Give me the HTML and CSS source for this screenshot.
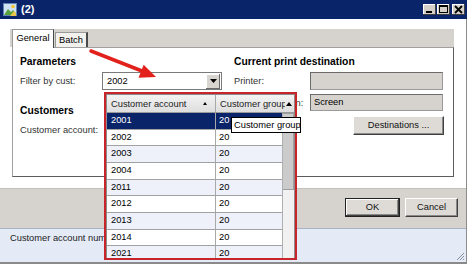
FILE: index.html
```html
<!DOCTYPE html>
<html>
<head>
<meta charset="utf-8">
<link rel="stylesheet" href="styles.css">
</head>
<body>
<div class="window">
  <div class="titlebar">
    <svg class="app-icon" width="14" height="13" viewBox="0 0 14 13">
      <rect x="0.5" y="0.5" width="13" height="12" fill="#cfe2f4" stroke="#5f86b0"/>
      <path d="M1 12 L5 6 L8 9 L10 7 L13 11 L13 12 Z" fill="#5aa33c"/>
      <circle cx="10" cy="3.5" r="1.8" fill="#f2c531"/>
      <path d="M7 13 L11 8 L13 10 L13 13 Z" fill="#e8c64a"/>
    </svg>
    <span class="title">(2)</span>
    <div class="caption-buttons">
      <span class="cap-btn"><svg width="13" height="11" viewBox="0 0 13 11"><rect x="3" y="7" width="6" height="2" fill="#000"/></svg></span>
      <span class="cap-btn"><svg width="13" height="11" viewBox="0 0 13 11"><rect x="2.5" y="1.5" width="8" height="7" fill="none" stroke="#000"/><rect x="2" y="1" width="9" height="2" fill="#000"/></svg></span>
      <span class="cap-btn cap-close"><svg width="13" height="11" viewBox="0 0 13 11"><path d="M3 2 L10 9 M10 2 L3 9" stroke="#000" stroke-width="1.8"/></svg></span>
    </div>
  </div>
  <div class="client">
    <div class="tabctl">
      <div class="tabstrip">
        <div class="tab tab-active">General</div>
        <div class="tab tab-batch">Batch</div>
      </div>
      <div class="panel">
        <div class="col col-left">
          <div class="group-title">Parameters</div>
          <div class="row">
            <span class="lbl lbl-left">Filter by cust:</span>
            <div class="combo">
              <span class="combo-text">2002</span>
              <span class="combo-btn"><svg width="7" height="4" viewBox="0 0 7 4"><path d="M0 0 H7 L3.5 4 Z" fill="#000"/></svg></span>
            </div>
          </div>
          <div class="group-title group-gap">Customers</div>
          <div class="row">
            <span class="lbl lbl-left">Customer account:</span>
          </div>
        </div>
        <div class="col col-right">
          <div class="group-title">Current print destination</div>
          <div class="row">
            <span class="lbl lbl-right">Printer:</span>
            <div class="field"></div>
          </div>
          <div class="row row-2">
            <span class="lbl lbl-right">Print destination:</span>
            <div class="field">Screen</div>
          </div>
          <div class="btn-row">
            <div class="btn btn-dest">Destinations ...</div>
          </div>
        </div>
      </div>
    </div>
    <div class="buttonbar">
      <div class="btn btn-ok">OK</div>
      <div class="btn btn-cancel">Cancel</div>
    </div>
    <div class="statusbar">
      <span class="status-text">Customer account number</span>
      <svg class="grip" width="9" height="9" viewBox="0 0 9 9">
        <path d="M8 1 L1 8 M8 4 L4 8 M8 7 L7 8" stroke="#8a8f99" stroke-width="1"/>
      </svg>
    </div>
  </div>

  <div class="lookup">
    <div class="grid">
      <div class="grid-head">
        <div class="hcell hcell-1"><span class="htext">Customer account</span><span class="sort sort-small"></span></div>
        <div class="hcell hcell-2"><span class="htext">Customer group</span><span class="sort"></span></div>
      </div>
      <div class="grid-body">
        <div class="rows">
          <div class="grow sel"><span class="c1">2001</span><span class="c2">20</span></div>
          <div class="grow"><span class="c1">2002</span><span class="c2">20</span></div>
          <div class="grow alt"><span class="c1">2003</span><span class="c2">20</span></div>
          <div class="grow"><span class="c1">2004</span><span class="c2">20</span></div>
          <div class="grow alt"><span class="c1">2011</span><span class="c2">20</span></div>
          <div class="grow"><span class="c1">2012</span><span class="c2">20</span></div>
          <div class="grow alt"><span class="c1">2013</span><span class="c2">20</span></div>
          <div class="grow"><span class="c1">2014</span><span class="c2">20</span></div>
          <div class="grow alt"><span class="c1">2021</span><span class="c2">20</span></div>
        </div>
        <div class="vscroll"><div class="thumb"></div></div>
      </div>
    </div>
  </div>

  <div class="tooltip">Customer group</div>

  <svg class="arrow" width="474" height="264" viewBox="0 0 474 264">
    <path d="M91 51 L142 71" stroke="#e3211c" stroke-width="3.5" stroke-linecap="round"/>
    <path d="M156 77 L138.5 77.7 L143.7 64.7 Z" fill="#e3211c"/>
  </svg>
</div>
</body>
</html>
```

FILE: styles.css
```css
* { box-sizing: border-box; }

html, body {
  margin: 0;
  padding: 0;
  background: #ffffff;
  width: 474px;
  height: 264px;
  overflow: hidden;
  font-family: "Liberation Sans", Arial, sans-serif;
  font-size: 9.3px;
  color: #000;
}

.window {
  position: relative;
  width: 467px;
  height: 264px;
  display: flex;
  flex-direction: column;
  background: #ffffff;
}

/* title bar */
.titlebar {
  height: 19px;
  flex: none;
  background: #0a246a;
  display: flex;
  align-items: center;
  padding-left: 3px;
  padding-right: 2px;
}
.app-icon { flex: none; }
.title {
  margin-left: 4px;
  color: #fff;
  font-weight: bold;
  font-size: 11px;
  line-height: 13px;
}
.caption-buttons {
  margin-left: auto;
  display: flex;
  gap: 1px;
}
.cap-btn {
  width: 13px;
  height: 11px;
  background: #d4d0c8;
  box-shadow: inset -1px -1px #404040, inset 1px 1px #ffffff;
  display: flex;
}
.cap-close { margin-left: 1px; }

/* client */
.client {
  flex: 1;
  display: flex;
  flex-direction: column;
  border-right: 1px solid #8c8c8c;
  border-bottom: 2px solid #8a8a8a;
}

.tabctl {
  margin: 10px 0 0 10px;
  width: 444px;
  flex: none;
}
.tabstrip {
  height: 18px;
  background: #d6d3ce;
  display: flex;
  align-items: flex-end;
  padding-left: 2px;
  gap: 1px;
}
.tab {
  position: relative;
  text-align: center;
  border: 1px solid #9a9a9a;
  border-right-color: #4a4a4a;
  border-bottom: none;
  line-height: 15px;
}
.tab-active {
  width: 42px;
  height: 19px;
  margin-bottom: -1px;
  background: #ffffff;
  z-index: 1;
  padding-top: 1px;
}
.tab-batch {
  width: 33px;
  height: 15px;
  background: #f2f1ee;
  border-right-width: 2px;
  line-height: 14px;
}

.panel {
  height: 130px;
  margin-left: 2px;
  background: #ffffff;
  border: 1px solid #a0a0a0;
  border-right-color: #5c5c5c;
  border-bottom-color: #5c5c5c;
  display: flex;
  padding: 7px 0 0 7px;
}
.col-left { width: 214px; }
.col-right { width: 210px; }

.group-title {
  font-weight: bold;
  font-size: 10.3px;
  height: 14px;
  line-height: 14px;
}
.group-gap { margin-top: 14px; }

.row {
  display: flex;
  align-items: center;
  height: 18px;
  margin-top: 3px;
}
.row-2 { margin-top: 4px; height: 17px; }

.lbl { color: #333; white-space: nowrap; }
.lbl-left { width: 82px; flex: none; }
.lbl-right { width: 76px; flex: none; }

.combo {
  width: 120px;
  height: 18px;
  border: 1px solid #7a7a7a;
  background: #fff;
  display: flex;
  align-items: center;
  padding: 1px;
}
.combo-text { flex: 1; padding-left: 3px; }
.combo-btn {
  width: 14px;
  height: 15px;
  background: #d8d5d0;
  box-shadow: inset -1px -1px #6a6a6a, inset 1px 1px #ffffff;
  display: flex;
  align-items: center;
  justify-content: center;
}

.field {
  width: 133px;
  height: 100%;
  background: #d6d3ce;
  border: 1px solid #9a9a9a;
  border-top-color: #6a6a6a;
  border-left-color: #6a6a6a;
  padding-left: 3px;
  line-height: 15px;
}

.btn-row {
  display: flex;
  justify-content: flex-end;
  margin-top: 5px;
  width: 210px;
}

.btn {
  height: 19px;
  background: #dedbd6;
  border: 1px solid;
  border-color: #ffffff #404040 #404040 #ffffff;
  box-shadow: inset -1px -1px #8a8a8a;
  text-align: center;
  line-height: 17px;
  color: #111;
}
.btn-dest { width: 91px; }

.buttonbar {
  flex: none;
  margin-top: 11px;
  height: 40px;
  background: #d6d3ce;
  border-top: 1px solid #c4c1bb;
  display: flex;
  justify-content: flex-end;
  align-items: flex-start;
  gap: 5px;
  padding: 9px 8px 0 0;
}
.btn-ok {
  width: 55px;
  border: 1px solid #222;
  box-shadow: inset -1px -1px #404040, inset 1px 1px #ffffff, inset -2px -2px #8a8a8a;
}
.btn-cancel { width: 53px; }

.statusbar {
  flex: 1;
  background: #e4eaf6;
  border-top: 1px solid #aab3c5;
  display: flex;
  justify-content: space-between;
  align-items: flex-start;
  padding: 2px 1px 1px 10px;
}
.status-text { line-height: 14px; color: #222; }
.grip { align-self: flex-end; }

/* lookup drop-down */
.lookup {
  position: absolute;
  left: 104px;
  top: 92px;
  width: 193px;
  height: 168px;
  border: 2px solid #c8252b;
  background: #fff;
  z-index: 5;
}
.grid {
  height: 100%;
  border: 1px solid #8c8c8c;
  border-bottom: none;
  overflow: hidden;
}
.grid-head {
  display: flex;
  height: 18px;
  border-bottom: 1px solid #9a9a9a;
  background: linear-gradient(#f3f3f3, #dedede);
}
.hcell {
  display: flex;
  align-items: center;
  padding-left: 4px;
  overflow: hidden;
  white-space: nowrap;
  color: #222;
}
.hcell-1 {
  width: 109px;
  flex: none;
  border-right: 1px solid #a8a8a8;
}
.hcell-2 { flex: 1; padding-right: 2px; }
.htext { flex: 1; overflow: hidden; }
.hcell-1 .htext { flex: none; width: 91px; }
.sort {
  flex: none;
  width: 0;
  height: 0;
  border-left: 3.5px solid transparent;
  border-right: 3.5px solid transparent;
  border-bottom: 4px solid #000;
  margin-left: 1px;
}
.sort-small {
  border-left-width: 2.5px;
  border-right-width: 2.5px;
  border-bottom-width: 3px;
}

.grid-body { display: flex; }
.rows { width: 175px; flex: none; }
.grow {
  display: flex;
  height: 16.67px;
  border-bottom: 1px solid #a2a2a2;
  line-height: 15px;
  background: #fff;
}
.grow.alt { background: #eef1f9; }
.grow.sel { background: #0a246a; color: #fff; }
.c1 {
  width: 109px;
  flex: none;
  padding-left: 4px;
  border-right: 1px solid #a8a8a8;
}
.c2 { flex: 1; padding-left: 3px; }

.vscroll {
  width: 13px;
  height: 160px;
  background: #f1f1f1;
  border-left: 1px solid #b0b0b0;
}
.thumb {
  height: 77px;
  background: #cbcbcb;
  border: 1px solid #9e9e9e;
  border-left: none;
}

.tooltip {
  position: absolute;
  left: 231px;
  top: 117px;
  width: 70px;
  height: 16px;
  border: 1px solid #000;
  background: #ffffff;
  padding-left: 2px;
  line-height: 14px;
  white-space: nowrap;
  overflow: hidden;
  z-index: 6;
}

.arrow {
  position: absolute;
  left: 0;
  top: 0;
  z-index: 7;
  pointer-events: none;
}
```
